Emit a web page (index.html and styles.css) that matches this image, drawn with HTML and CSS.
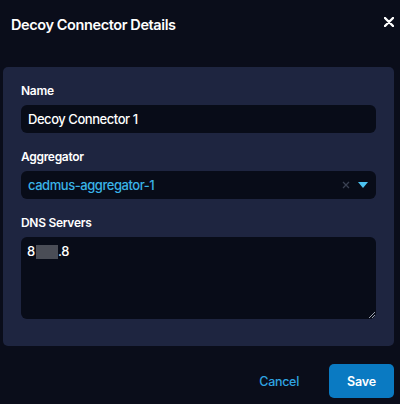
FILE: index.html
```html
<!DOCTYPE html>
<html>
<head>
<meta charset="utf-8">
<link rel="stylesheet" href="styles.css">
</head>
<body>
<div class="dialog">
  <div class="header">
    <h1 class="title">Decoy Connector Details</h1>
    <button class="close" aria-label="Close">
      <svg width="10" height="10" viewBox="0 0 10 10"><path d="M1 1L9 9M9 1L1 9" stroke="#fff" stroke-width="2.4" stroke-linecap="round"/></svg>
    </button>
  </div>
  <div class="panel">
    <div class="field">
      <label class="label">Name</label>
      <div class="input">Decoy Connector 1</div>
    </div>
    <div class="field">
      <label class="label">Aggregator</label>
      <div class="input select">
        <span class="sel-value">cadmus-aggregator-1</span>
        <span class="sel-icons">
          <svg class="clear" width="8" height="8" viewBox="0 0 8 8"><path d="M1 1L7 7M7 1L1 7" stroke="#3a4152" stroke-width="1.3"/></svg>
          <svg class="caret" width="10" height="6" viewBox="0 0 10 6"><path d="M0 0H10L5 6Z" fill="#4cc3f0"/></svg>
        </span>
      </div>
    </div>
    <div class="field">
      <label class="label">DNS Servers</label>
      <div class="textarea">8<span class="redact"></span>.8
        <svg class="grip" width="7" height="7" viewBox="0 0 7 7"><path d="M7 1L1 7M7 4L4 7" stroke="#9aa0ad" stroke-width="1"/></svg>
      </div>
    </div>
  </div>
  <div class="footer">
    <button class="btn-cancel">Cancel</button>
    <button class="btn-save">Save</button>
  </div>
</div>
</body>
</html>
```
FILE: styles.css
```css
* { box-sizing: border-box; }
html, body { margin: 0; padding: 0; }
body {
  width: 400px;
  height: 404px;
  background: #0a0d1a;
  font-family: Inter, "Noto Sans", sans-serif;
  color: #fff;
  overflow: hidden;
}
.dialog {
  display: flex;
  flex-direction: column;
  height: 404px;
}
.header {
  display: flex;
  justify-content: space-between;
  align-items: flex-start;
  padding: 14px 4px 0 11px;
  height: 46px;
}
.title {
  margin: 0;
  margin-top: 1px;
  font-size: 14.5px;
  font-weight: 600;
  line-height: 20px;
  letter-spacing: -0.4px;
}
.close {
  background: none;
  border: 0;
  padding: 0;
  margin-top: 1px;
  width: 14px;
  height: 14px;
  display: flex;
  align-items: center;
  justify-content: center;
  cursor: pointer;
}
.panel {
  margin: 21px 6px 0 3px;
  background: #1e2540;
  border-radius: 5px;
  padding: 15px 18px 27px 18px;
  display: flex;
  flex-direction: column;
  gap: 15px;
}
.field {
  display: flex;
  flex-direction: column;
  gap: 6px;
}
.label {
  font-size: 12px;
  font-weight: 600;
  line-height: 17px;
  letter-spacing: -0.3px;
  color: #fff;
}
.input {
  height: 28px;
  background: #080c18;
  border-radius: 6px;
  padding: 0 7px;
  display: flex;
  align-items: center;
  font-size: 13px;
  font-weight: 500;
  letter-spacing: -0.45px;
  color: #fff;
}
.select { justify-content: space-between; }
.sel-value { color: #3ab4e8; }
.sel-icons {
  display: flex;
  align-items: center;
  gap: 8px;
  padding-right: 1px;
}
.textarea {
  position: relative;
  height: 82px;
  background: #080c18;
  border-radius: 6px;
  padding: 6px 6px;
  font-size: 13px;
  font-weight: 500;
  line-height: 16px;
  letter-spacing: -0.3px;
  color: #fff;
}
.redact {
  display: inline-block;
  width: 22px;
  height: 14px;
  background: #4a4d56;
  vertical-align: -3px;
  margin-left: 1px;
}
.grip {
  position: absolute;
  right: 1px;
  bottom: 1px;
}
.footer {
  display: flex;
  justify-content: flex-end;
  align-items: center;
  gap: 30px;
  padding: 18px 6px 0 0;
}
.btn-cancel {
  background: none;
  border: 0;
  color: #2fa4e2;
  font-family: inherit;
  font-size: 12.5px;
  font-weight: 500;
  letter-spacing: -0.3px;
  padding: 0;
}
.btn-save {
  background: #0a7ac2;
  border: 0;
  border-radius: 5px;
  color: #fff;
  font-family: inherit;
  font-size: 12.5px;
  font-weight: 600;
  letter-spacing: -0.2px;
  width: 65px;
  height: 34px;
}
```
